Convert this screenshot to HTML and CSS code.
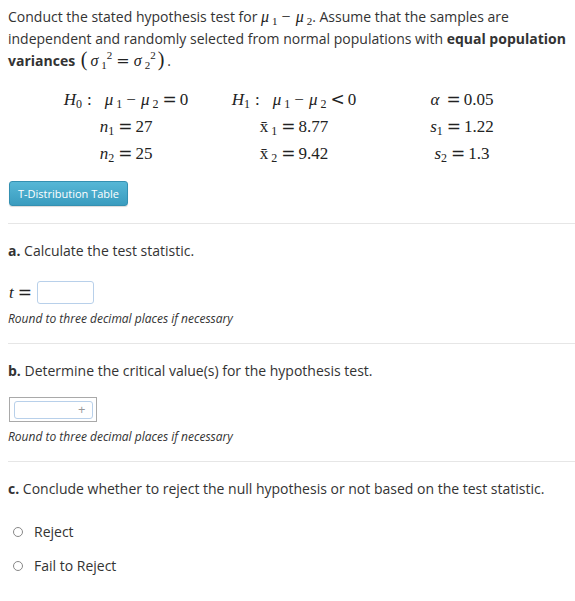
FILE: index.html
```html
<!DOCTYPE html>
<html>
<head>
<meta charset="utf-8">
<link rel="stylesheet" href="styles.css">
</head>
<body>
<div class="page">
  <p class="intro">Conduct the stated hypothesis test for <span class="m"><i>μ</i><sub>1</sub><span class="bin">−</span><i>μ</i><sub>2</sub></span>. Assume that the samples are independent and randomly selected from normal populations with <b>equal population variances</b> <span class="m"><span class="big">(</span><i>σ</i><sub>1</sub><sup>2</sup><span class="rel">=</span><i>σ</i><sub>2</sub><sup>2</sup><span class="big">)</span></span>.</p>

  <div class="given">
    <div class="cell m"><i>H</i><sub class="tight">0</sub><span class="colon">:</span><i>μ</i><sub>1</sub><span class="bin">−</span><i>μ</i><sub>2</sub><span class="rel">=</span>0</div>
    <div class="cell m"><i>H</i><sub class="tight">1</sub><span class="colon">:</span><i>μ</i><sub>1</sub><span class="bin">−</span><i>μ</i><sub>2</sub><span class="rel">&lt;</span>0</div>
    <div class="cell m"><i>α</i><span class="rel wide">=</span>0.05</div>
    <div class="cell m"><i>n</i><sub class="tight">1</sub><span class="rel">=</span>27</div>
    <div class="cell m">x̄<sub>1</sub><span class="rel">=</span>8.77</div>
    <div class="cell m"><i>s</i><sub class="tight">1</sub><span class="rel">=</span>1.22</div>
    <div class="cell m"><i>n</i><sub class="tight">2</sub><span class="rel">=</span>25</div>
    <div class="cell m">x̄<sub>2</sub><span class="rel">=</span>9.42</div>
    <div class="cell m"><i>s</i><sub class="tight">2</sub><span class="rel">=</span>1.3</div>
  </div>

  <button class="btn" type="button">T-Distribution Table</button>

  <hr class="sep first">
  <p class="q"><b>a.</b> Calculate the test statistic.</p>
  <div class="answer-row">
    <span class="m lbl"><i>t</i><span class="rel">=</span></span><span class="input"></span>
  </div>
  <p class="hint">Round to three decimal places if necessary</p>

  <hr class="sep">
  <p class="q"><b>b.</b> Determine the critical value(s) for the hypothesis test.</p>
  <div class="dropdown"><span class="inner"><span class="plus">+</span></span></div>
  <p class="hint">Round to three decimal places if necessary</p>

  <hr class="sep">
  <p class="q"><b>c.</b> Conclude whether to reject the null hypothesis or not based on the test statistic.</p>
  <div class="options">
    <label class="opt"><span class="radio"></span>Reject</label>
    <label class="opt"><span class="radio"></span>Fail to Reject</label>
  </div>
</div>
</body>
</html>
```

FILE: styles.css
```css
html, body {
  margin: 0;
  padding: 0;
  background: #fff;
}
body {
  padding: 6px 8px 0 8px;
  font-family: "Open Sans", "Noto Sans", sans-serif;
  font-size: 14px;
  color: #333;
  overflow: hidden;
}
.page {
  width: 559px;
}
p { margin: 0; }
.intro {
  line-height: 22px;
}
.intro b { font-weight: 700; }
.m {
  font-family: "Liberation Serif", "DejaVu Serif", serif;
  font-size: 17px;
  color: #222;
}
.intro .m { line-height: 1; font-size: 16px; }
.m i { font-style: italic; }
.m sub, .m sup {
  font-size: 12px;
  line-height: 0;
  position: relative;
  vertical-align: baseline;
}
.m sub { top: 3px; margin-left: 3px; }
.m sub.tight { margin-left: 0; }
.m sup { top: -7px; margin-left: 0; }
.intro .m sub, .intro .m sup { font-size: 11px; }
.rel {
  font-family: "DejaVu Sans", sans-serif;
  margin: 0 3px 0 4px;
}
.rel.wide { margin-left: 7px; }
.intro .rel { margin: 0 4px; }
.bin { margin: 0 5px 0 4px; }
.colon { margin: 0 13px 0 5px; }
.big { font-size: 20px; line-height: 0; margin: 0 3px 0 2px; }
.given {
  display: grid;
  grid-template-columns: 168px 168px 168px;
  grid-auto-rows: 27px;
  margin: 14px 0 0 34px;
}
.cell {
  text-align: center;
  line-height: 27px;
  white-space: nowrap;
}
.btn {
  display: block;
  margin: 14px 0 0 1px;
  width: 119px;
  height: 25px;
  padding: 0;
  font-family: "Open Sans", "Noto Sans", sans-serif;
  font-size: 11px;
  color: #fff;
  background: linear-gradient(#56b7d6, #3a9cbf);
  border: 1px solid #3490b1;
  border-radius: 3px;
  box-shadow: 0 1px 1px rgba(0,0,0,0.15);
}
.sep {
  border: 0;
  border-top: 1px solid #e6e6e6;
  margin: 16px -8px 0 0;
  height: 0;
}
.sep.first { margin-top: 17px; }
.q {
  margin-top: 16px;
  line-height: 22px;
}
.q b { font-weight: 700; }
.answer-row {
  display: flex;
  align-items: center;
  margin-top: 19px;
  height: 23px;
}
.lbl {
  margin-left: 1px;
  margin-right: 3px;
  line-height: 23px;
}
.lbl .rel { margin: 0 2px 0 4px; }
.input {
  display: inline-block;
  width: 55px;
  height: 21px;
  border: 1px solid #b8d0ea;
  border-radius: 3px;
  background: #fff;
}
.hint {
  margin-top: 7px;
  font-size: 12px;
  font-style: italic;
  line-height: 16px;
  color: #333;
}
.dropdown {
  margin: 15px 0 0 1px;
  width: 86px;
  height: 23px;
  border: 1px solid #a9a9a9;
  display: flex;
  align-items: center;
  justify-content: center;
}
.inner {
  position: relative;
  width: 77px;
  height: 16px;
  border: 1px solid #b8d0ea;
  border-radius: 3px;
}
.plus {
  position: absolute;
  right: 6px;
  top: -3px;
  font-size: 13px;
  color: #999;
  line-height: 20px;
}
.options {
  margin-top: 21px;
  display: flex;
  flex-direction: column;
  gap: 12px;
}
.opt {
  display: flex;
  align-items: center;
  line-height: 22px;
}
.radio {
  width: 8px;
  height: 8px;
  border: 1px solid #888;
  border-radius: 50%;
  margin: 0 11px 0 5px;
}
```
